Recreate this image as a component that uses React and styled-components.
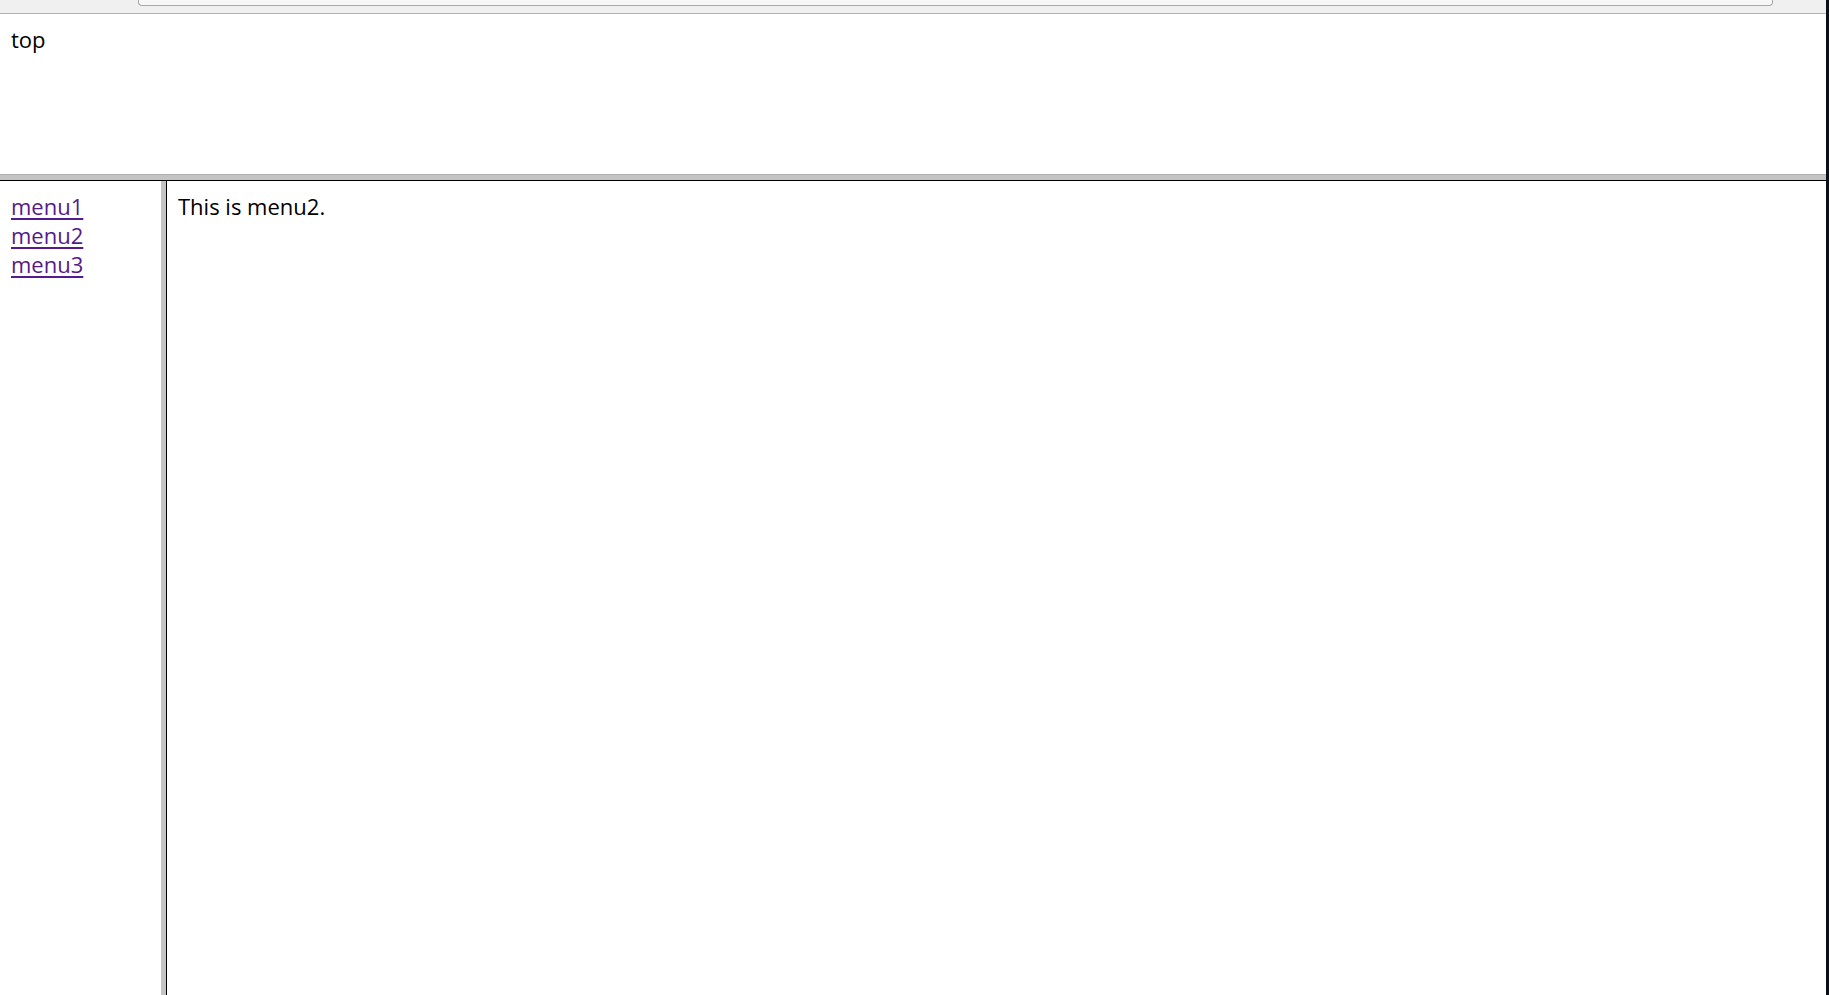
import React from "react";
import styled, { createGlobalStyle } from "styled-components";

const Global = createGlobalStyle`
  html, body { margin: 0; padding: 0; height: 100%; overflow: hidden; background: #ffffff; }
  #root { height: 100%; }
`;

const Screen = styled.div`
  display: grid;
  grid-template-columns: 1fr 3px;
  height: 995px;
  width: 1829px;
  font-family: "Open Sans", "Noto Sans", "Liberation Sans", sans-serif;
  font-size: 22px;
  line-height: 29px;
  color: #000;
`;

const Edge = styled.div`
  background: #0b0f1c;
`;

const Window = styled.div`
  display: flex;
  flex-direction: column;
  min-width: 0;
  min-height: 0;
`;

const Chrome = styled.div`
  height: 13px;
  flex: none;
  background: #f0f0f0;
  border-bottom: 1px solid #b4b4b4;
  padding-left: 138px;
  padding-right: 53px;
  display: flex;
  align-items: flex-start;
`;

const AddressBox = styled.div`
  flex: 1;
  height: 5px;
  background: #f7f7f7;
  border: 1px solid #a8a8a8;
  border-top: none;
  border-radius: 0 0 4px 4px;
`;

const TopFrame = styled.div`
  height: 160px;
  flex: none;
  padding: 11px;
  box-sizing: border-box;
  background: #fff;
`;

const HSplit = styled.div`
  flex: none;
  height: 5px;
  background: #c4c4c4;
  border-top: 1px solid #b0b0b0;
  border-bottom: 1px solid #000;
`;

const Bottom = styled.div`
  flex: 1;
  display: flex;
  min-height: 0;
`;

const SideFrame = styled.nav`
  width: 161px;
  flex: none;
  padding: 11px;
  box-sizing: border-box;
  display: flex;
  flex-direction: column;
  align-items: flex-start;
`;

const VSplit = styled.div`
  flex: none;
  width: 5px;
  background: #c4c4c4;
  border-right: 1px solid #000;
`;

const MainFrame = styled.main`
  flex: 1;
  padding: 11px;
  box-sizing: border-box;
`;

const MenuLink = styled.a`
  color: #551a8b;
  text-decoration: underline;
  text-decoration-thickness: 2px;
  text-underline-offset: 3px;
`;

const Para = styled.p`
  margin: 0;
`;

export default function App() {
  return (
    <>
      <Global />
      <Screen>
        <Window>
          <Chrome>
            <AddressBox />
          </Chrome>
          <TopFrame>top</TopFrame>
          <HSplit />
          <Bottom>
            <SideFrame>
              <MenuLink href="#menu1">menu1</MenuLink>
              <MenuLink href="#menu2">menu2</MenuLink>
              <MenuLink href="#menu3">menu3</MenuLink>
            </SideFrame>
            <VSplit />
            <MainFrame>
              <Para>This is menu2.</Para>
            </MainFrame>
          </Bottom>
        </Window>
        <Edge />
      </Screen>
    </>
  );
}
